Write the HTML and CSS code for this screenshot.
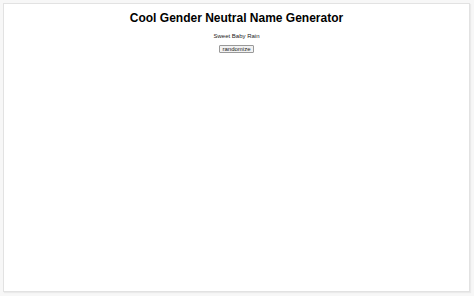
FILE: index.html
```html
<!DOCTYPE html>
<html>
<head>
<meta charset="utf-8">
<link rel="stylesheet" href="styles.css">
</head>
<body>
<div class="frame">
  <h1 class="title">Cool Gender Neutral Name Generator</h1>
  <p class="name">Sweet Baby Rain</p>
  <button class="btn">randomize</button>
</div>
</body>
</html>
```

FILE: styles.css
```css
html, body {
  margin: 0;
  padding: 0;
  background: #f7f7f7;
}
body {
  padding: 3px 4px 4px 3px;
  font-family: "Liberation Sans", Arial, sans-serif;
}
.frame {
  box-sizing: border-box;
  height: 289px;
  background: #fff;
  border: 1px solid #e2e2e2;
  box-shadow: 1px 1px 1px rgba(0,0,0,0.05);
  display: flex;
  flex-direction: column;
  align-items: center;
  color: #000;
}
.title {
  font-size: 12px;
  font-weight: bold;
  line-height: 14px;
  margin: 7px 0 0;
}
.name {
  font-size: 6px;
  line-height: 7px;
  margin: 8px 0 0;
  color: #222;
}
.btn {
  font-family: "Liberation Sans", Arial, sans-serif;
  font-size: 6px;
  line-height: 6px;
  margin-top: 5px;
  padding: 0 2px;
  height: 8px;
  background: #f2f2f2;
  border: 1px solid #999;
  border-radius: 1px;
  color: #222;
}
```
